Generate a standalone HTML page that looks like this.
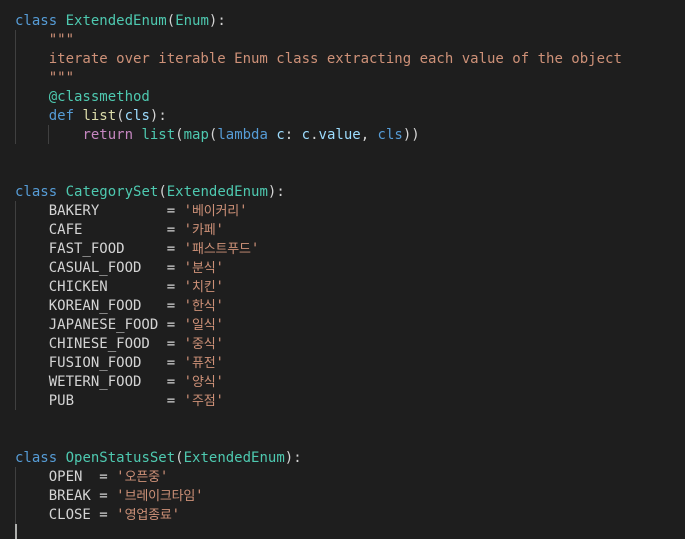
<!DOCTYPE html>
<html><head><meta charset="utf-8"><style>
html,body{margin:0;padding:0;background:#1e1e1e;width:685px;height:539px;overflow:hidden}
pre{margin:0;position:absolute;left:15px;top:12px;font:14px/19px "DejaVu Sans Mono","Noto Sans CJK KR",monospace;color:#d4d4d4}
.k{color:#569cd6}.t{color:#4ec9b0}.s{color:#ce9178}.f{color:#dcdcaa}.r{color:#c586c0}.v{color:#9cdcfe}
.h{font-size:13px;letter-spacing:-0.2px}
.g{position:absolute;width:1px;background:#404040}
</style></head><body>
<div class="g" style="left:15px;top:30px;height:114px"></div>
<div class="g" style="left:48px;top:125px;height:19px"></div>
<div class="g" style="left:15px;top:201px;height:209px"></div>
<div class="g" style="left:15px;top:467px;height:72px"></div>
<div class="g" style="left:15px;top:524px;height:15px;background:#aeafad;width:2px"></div>
<pre><span class="k">class</span> <span class="t">ExtendedEnum</span>(<span class="t">Enum</span>):
    <span class="s">"""</span>
<span class="s">    iterate over iterable Enum class extracting each value of the object</span>
    <span class="s">"""</span>
    <span class="t">@classmethod</span>
    <span class="k">def</span> <span class="f">list</span>(<span class="v">cls</span>):
        <span class="r">return</span> <span class="t">list</span>(<span class="t">map</span>(<span class="k">lambda</span> <span class="v">c</span>: <span class="v">c</span>.<span class="v">value</span>, <span class="k">cls</span>))


<span class="k">class</span> <span class="t">CategorySet</span>(<span class="t">ExtendedEnum</span>):
    BAKERY        = <span class="s">'<span class="h">베이커리</span>'</span>
    CAFE          = <span class="s">'<span class="h">카페</span>'</span>
    FAST_FOOD     = <span class="s">'<span class="h">패스트푸드</span>'</span>
    CASUAL_FOOD   = <span class="s">'<span class="h">분식</span>'</span>
    CHICKEN       = <span class="s">'<span class="h">치킨</span>'</span>
    KOREAN_FOOD   = <span class="s">'<span class="h">한식</span>'</span>
    JAPANESE_FOOD = <span class="s">'<span class="h">일식</span>'</span>
    CHINESE_FOOD  = <span class="s">'<span class="h">중식</span>'</span>
    FUSION_FOOD   = <span class="s">'<span class="h">퓨전</span>'</span>
    WETERN_FOOD   = <span class="s">'<span class="h">양식</span>'</span>
    PUB           = <span class="s">'<span class="h">주점</span>'</span>


<span class="k">class</span> <span class="t">OpenStatusSet</span>(<span class="t">ExtendedEnum</span>):
    OPEN  = <span class="s">'<span class="h">오픈중</span>'</span>
    BREAK = <span class="s">'<span class="h">브레이크타임</span>'</span>
    CLOSE = <span class="s">'<span class="h">영업종료</span>'</span>
</pre>
</body></html>
